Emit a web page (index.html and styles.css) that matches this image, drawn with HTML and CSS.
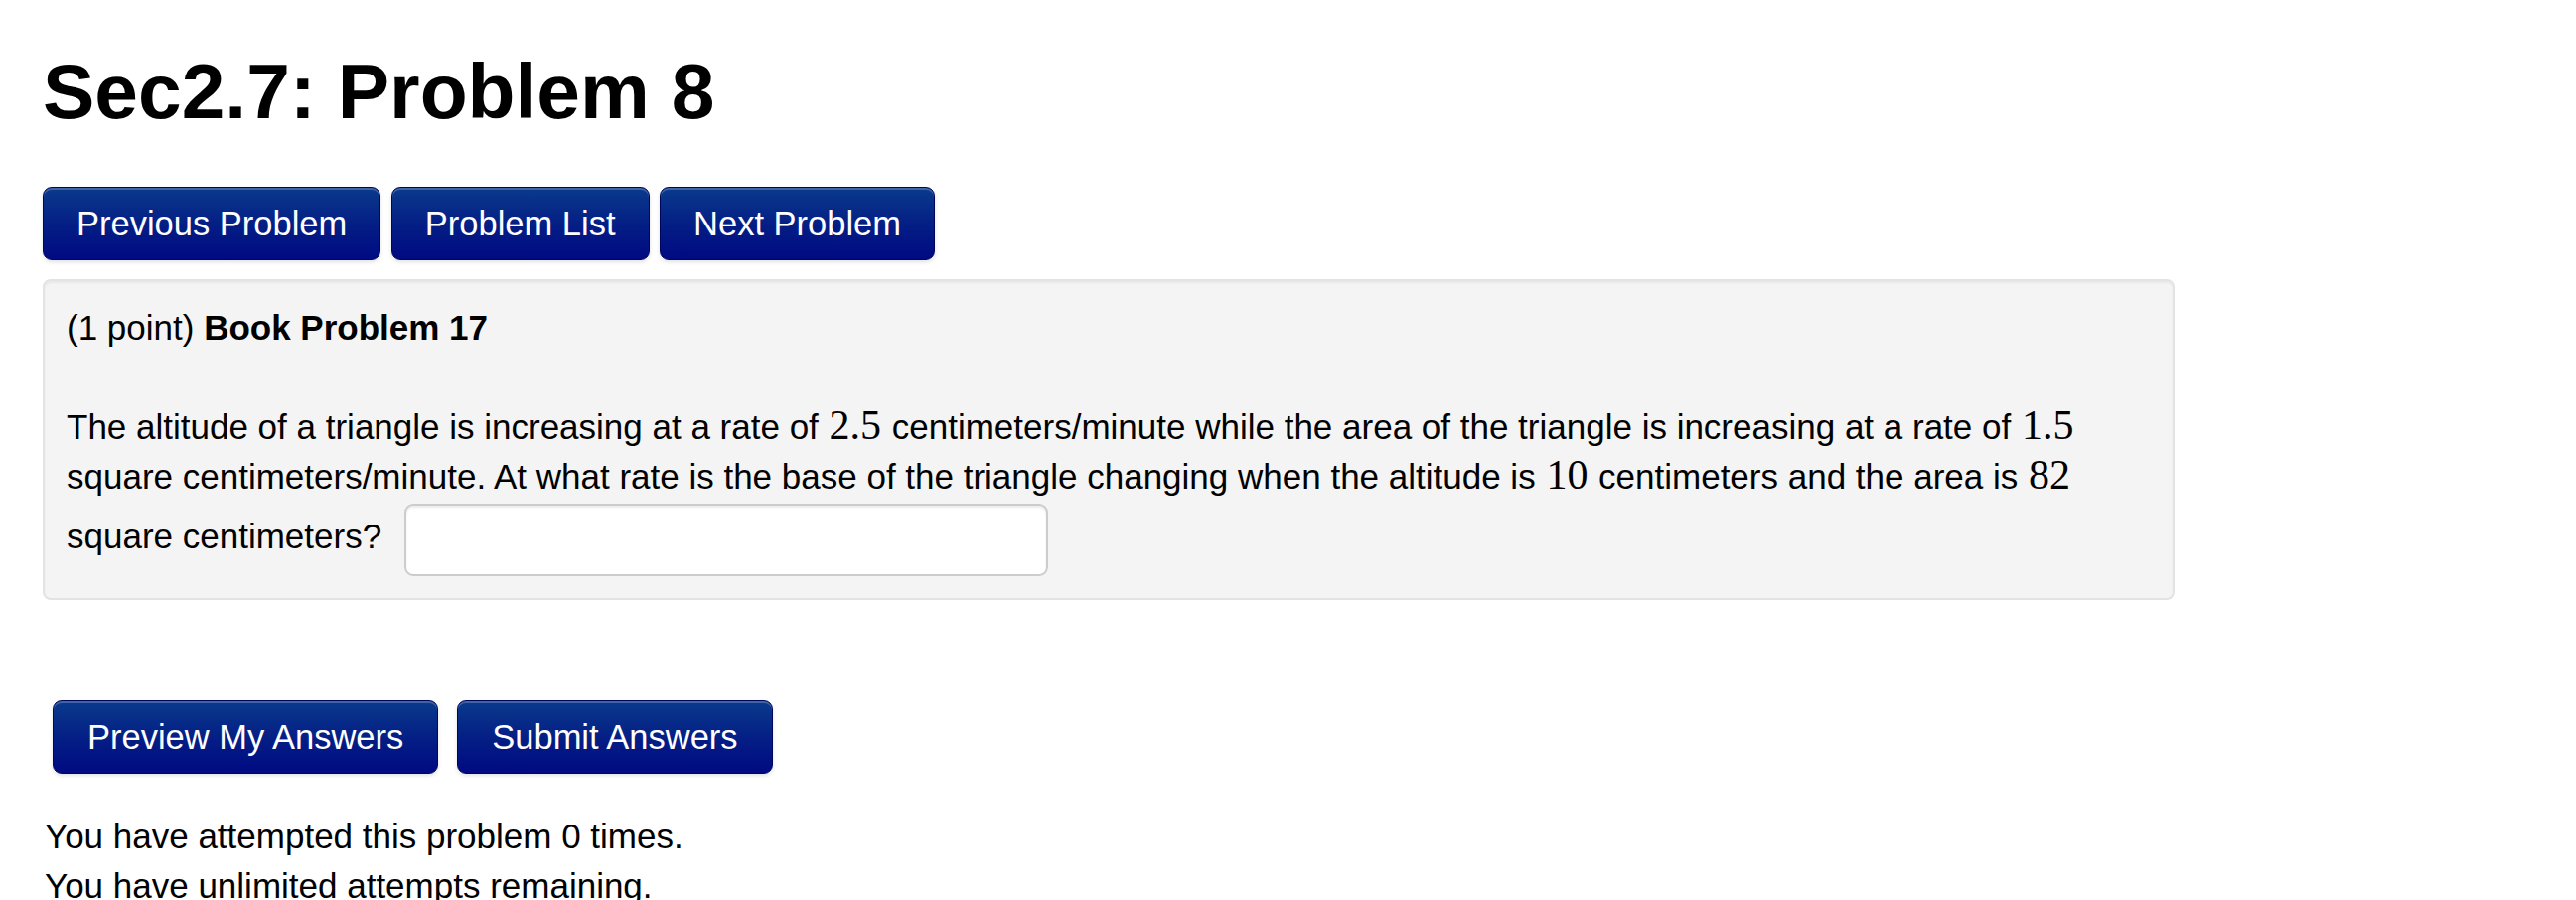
FILE: index.html
```html
<!DOCTYPE html>
<html lang="en">
<head>
<meta charset="utf-8">
<title>Sec2.7: Problem 8</title>
<link rel="stylesheet" href="styles.css">
</head>
<body>
<div class="page">
  <h1 class="title">Sec2.7: Problem 8</h1>
  <div class="nav">
    <button class="btn" type="button">Previous Problem</button>
    <button class="btn" type="button">Problem List</button>
    <button class="btn" type="button">Next Problem</button>
  </div>
  <div class="well">
    <div class="points">(1 point) <b>Book Problem 17</b></div>
    <div class="question">The altitude of a triangle is increasing at a rate of <span class="math">2.5</span> centimeters/minute while the area of the triangle is increasing at a rate of <span class="math">1.5</span> square centimeters/minute. At what rate is the base of the triangle changing when the altitude is <span class="math">10</span> centimeters and the area is <span class="math">82</span> square centimeters? <input class="answer" type="text" aria-label="answer"></div>
  </div>
  <div class="actions">
    <button class="btn btn-wide" type="button">Preview My Answers</button>
    <button class="btn btn-wide" type="button">Submit Answers</button>
  </div>
  <div class="status">
    <div>You have attempted this problem 0 times.</div>
    <div>You have unlimited attempts remaining.</div>
  </div>
</div>
</body>
</html>
```

FILE: styles.css
```css
html, body {
  margin: 0;
  padding: 0;
  background: #ffffff;
}

body {
  font-family: "Liberation Sans", Arial, Helvetica, sans-serif;
  color: #000000;
  font-size: 35px;
  line-height: 50px;
}

.page {
  padding-left: 43px;
}

.title {
  margin: 48px 0 0 0;
  font-size: 78.5px;
  line-height: 88px;
  font-weight: bold;
}

.nav {
  display: flex;
  gap: 10.5px;
  margin-top: 52px;
}

.btn {
  font-family: "Liberation Sans", Arial, Helvetica, sans-serif;
  font-size: 34.5px;
  line-height: 40px;
  padding: 16px 33px;
  color: #ffffff;
  border: 1px solid #00065c;
  border-radius: 9px;
  background: linear-gradient(to bottom, #0a3a8c 0%, #041f85 50%, #000a82 100%);
  box-shadow: inset 0 2px 0 rgba(255, 255, 255, 0.22), 0 2px 4px rgba(0, 0, 0, 0.12);
  cursor: pointer;
  white-space: nowrap;
}

.btn-wide {
  padding: 16px 34px;
}

.well {
  box-sizing: border-box;
  width: 2146px;
  margin-top: 19px;
  padding: 22px 22px 22px 22px;
  background: #f4f4f4;
  border: 2px solid #e3e3e3;
  border-radius: 8px;
  box-shadow: inset 0 2px 2px rgba(0, 0, 0, 0.05);
}

.points {
  line-height: 50px;
}

.points b {
  font-weight: bold;
}

.question {
  margin-top: 50px;
  line-height: 50px;
}

.math {
  font-family: "Liberation Serif", "Times New Roman", serif;
  font-size: 42px;
  line-height: 1;
  padding: 0 1px;
}

.answer {
  box-sizing: border-box;
  width: 648px;
  height: 73px;
  margin: 2px 0 0 13px;
  padding: 0 14px;
  vertical-align: middle;
  font-family: "Liberation Sans", Arial, sans-serif;
  font-size: 34.5px;
  background: #ffffff;
  border: 2px solid #cccccc;
  border-radius: 9px;
  box-shadow: inset 0 2px 2px rgba(0, 0, 0, 0.075);
  outline: none;
}

.actions {
  display: flex;
  gap: 19px;
  margin-top: 101px;
  padding-left: 10px;
}

.status {
  margin-top: 38px;
  padding-left: 2px;
  line-height: 50px;
}
```
